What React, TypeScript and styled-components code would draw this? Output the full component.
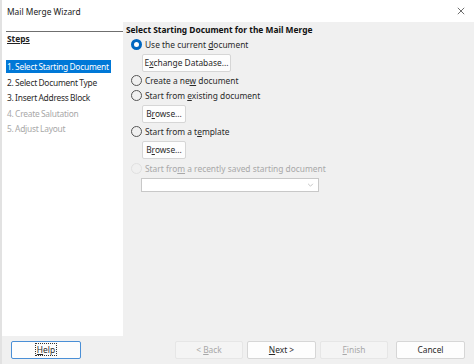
import * as React from 'react'
import styled, { createGlobalStyle } from 'styled-components'

const GlobalStyle = createGlobalStyle`
    html, body { margin: 0; padding: 0; }
    body {
        width: 474px;
        height: 364px;
        overflow: hidden;
        font-family: "Noto Sans", "Open Sans", sans-serif;
        font-size: 8.4px;
        color: #1a1a1a;
    }
`

const steps = [
    { label: '1. Select Starting Document', active: true },
    { label: '2. Select Document Type' },
    { label: '3. Insert Address Block' },
    { label: '4. Create Salutation', disabled: true },
    { label: '5. Adjust Layout', disabled: true },
]

const App: React.FC = () => {
    return (
        <>
            <GlobalStyle />
            <Window>
                <TitleBar>
                    <span>Mail Merge Wizard</span>
                    <CloseIcon viewBox="0 0 10 10">
                        <path d="M1 1 L9 9 M9 1 L1 9" stroke="#333" strokeWidth="0.9" />
                    </CloseIcon>
                </TitleBar>
                <Body>
                    <StepsPanel>
                        <Rule />
                        <StepsHeading>Steps</StepsHeading>
                        <StepList>
                            {steps.map((s) => (
                                <StepItem key={s.label} $active={s.active} $disabled={s.disabled}>
                                    {s.label}
                                </StepItem>
                            ))}
                        </StepList>
                    </StepsPanel>
                    <Content>
                        <PageTitle>Select Starting Document for the Mail Merge</PageTitle>
                        <Options>
                            <Option>
                                <Radio $checked />
                                <span>Use the current <u>d</u>ocument</span>
                            </Option>
                            <Indented>
                                <Button $w={89}>E<u>x</u>change Database...</Button>
                            </Indented>
                            <Option>
                                <Radio />
                                <span>Create a ne<u>w</u> document</span>
                            </Option>
                            <Option>
                                <Radio />
                                <span>Start from <u>e</u>xisting document</span>
                            </Option>
                            <Indented $gap={1.5}>
                                <Button $w={44}>B<u>r</u>owse...</Button>
                            </Indented>
                            <Option>
                                <Radio />
                                <span>Start from a t<u>e</u>mplate</span>
                            </Option>
                            <Indented $gap={2}>
                                <Button $w={44}>B<u>r</u>owse...</Button>
                            </Indented>
                            <Option $disabled>
                                <Radio $disabled />
                                <span>Start fro<u>m</u> a recently saved starting document</span>
                            </Option>
                            <Indented $shift={-1}>
                                <Combo>
                                    <svg width="7" height="4" viewBox="0 0 8 5">
                                        <path d="M1 1 L4 4 L7 1" fill="none" stroke="#b8b8b8" strokeWidth="1" />
                                    </svg>
                                </Combo>
                            </Indented>
                        </Options>
                    </Content>
                </Body>
                <Footer>
                    <Button $w={70} $focused><FocusText><u>H</u>elp</FocusText></Button>
                    <Spacer />
                    <Button $w={68} $disabled>&lt; <u>B</u>ack</Button>
                    <Button $w={69}><u>N</u>ext &gt;</Button>
                    <Button $w={68} $disabled><u>F</u>inish</Button>
                    <Gap />
                    <Button $w={69}>Cancel</Button>
                </Footer>
            </Window>
        </>
    )
}

const Window = styled.div`
    width: 474px;
    height: 364px;
    display: flex;
    flex-direction: column;
    background: #f0f0f0;
    border-left: 2px solid #e2e2e2;
    box-sizing: border-box;
`

const TitleBar = styled.div`
    height: 22px;
    flex: none;
    background: #fff;
    display: flex;
    align-items: center;
    justify-content: space-between;
    padding: 0 9px 0 5px;
    color: #222;
`

const CloseIcon = styled.svg`
    width: 8px;
    height: 8px;
`

const Body = styled.div`
    flex: 1;
    display: flex;
    min-height: 0;
`

const StepsPanel = styled.div`
    width: 121px;
    background: #fff;
    display: flex;
    flex-direction: column;
    padding: 9px 0 0 4px;
    box-sizing: border-box;
`

const Rule = styled.div`
    height: 1px;
    background: #6f6f6f;
`

const StepsHeading = styled.div`
    font-weight: bold;
    text-decoration: underline;
    margin-left: 1px;
    line-height: 13px;
    color: #222;
`

const StepList = styled.div`
    display: flex;
    flex-direction: column;
    margin-top: 15px;
`

const StepItem = styled.div<{ $active?: boolean; $disabled?: boolean }>`
    line-height: 13px;
    height: 13px;
    margin-bottom: 2.5px;
    padding-left: 1px;
    width: 105px;
    box-sizing: border-box;
    white-space: nowrap;
    letter-spacing: -0.22px;
    word-spacing: -0.5px;
    background: ${(p) => (p.$active ? '#0078d7' : 'transparent')};
    color: ${(p) => (p.$active ? '#fff' : p.$disabled ? '#a8a8a8' : '#2a2a2a')};
`

const Content = styled.div`
    flex: 1;
    padding: 1px 0 0 3px;
`

const PageTitle = styled.div`
    font-weight: bold;
    line-height: 14px;
    color: #111;
`

const Options = styled.div`
    display: flex;
    flex-direction: column;
    padding-left: 5px;
`

const Option = styled.div<{ $disabled?: boolean }>`
    display: flex;
    align-items: center;
    gap: 3px;
    height: 15px;
    color: ${(p) => (p.$disabled ? '#a8a8a8' : '#2a2a2a')};
`

const Radio = styled.span<{ $checked?: boolean; $disabled?: boolean }>`
    width: 11px;
    height: 11px;
    border-radius: 50%;
    box-sizing: border-box;
    flex: none;
    background: ${(p) => (p.$checked ? '#fff' : 'transparent')};
    border: ${(p) =>
        p.$checked ? '3px solid #0067c0' : p.$disabled ? '1px solid #e0e0e0' : '1px solid #555'};
`

const Indented = styled.div<{ $gap?: number; $shift?: number }>`
    padding: ${(p) => p.$gap ?? 1.5}px 0 ${(p) => p.$gap ?? 1.5}px ${(p) => 11 + (p.$shift ?? 0)}px;
    display: flex;
`

const Button = styled.div<{ $w: number; $disabled?: boolean; $focused?: boolean }>`
    width: ${(p) => p.$w}px;
    height: 18px;
    flex: none;
    box-sizing: border-box;
    display: block;
    text-align: center;
    line-height: 16px;
    border-radius: 2px;
    background: ${(p) => (p.$disabled ? '#f4f4f4' : '#fdfdfd')};
    border: 1px solid ${(p) => (p.$focused ? '#4a8fd6' : p.$disabled ? '#e6e6e6' : '#d6d6d6')};
    color: ${(p) => (p.$disabled ? '#a8a8a8' : '#2a2a2a')};
    white-space: nowrap;
`

const FocusText = styled.span`
    outline: 1px dotted #333;
    padding: 0 1px;
`

const Combo = styled.div`
    width: 178px;
    height: 14px;
    box-sizing: border-box;
    background: #fff;
    border: 1px solid #c8c8c8;
    display: flex;
    align-items: center;
    justify-content: flex-end;
    padding-right: 4px;
`

const Footer = styled.div`
    height: 28px;
    flex: none;
    display: flex;
    align-items: center;
    padding: 0 9px 0 9px;
    gap: 4px;
`

const Spacer = styled.div`
    flex: 1;
`

const Gap = styled.div`
    width: 0px;
`

export default App
